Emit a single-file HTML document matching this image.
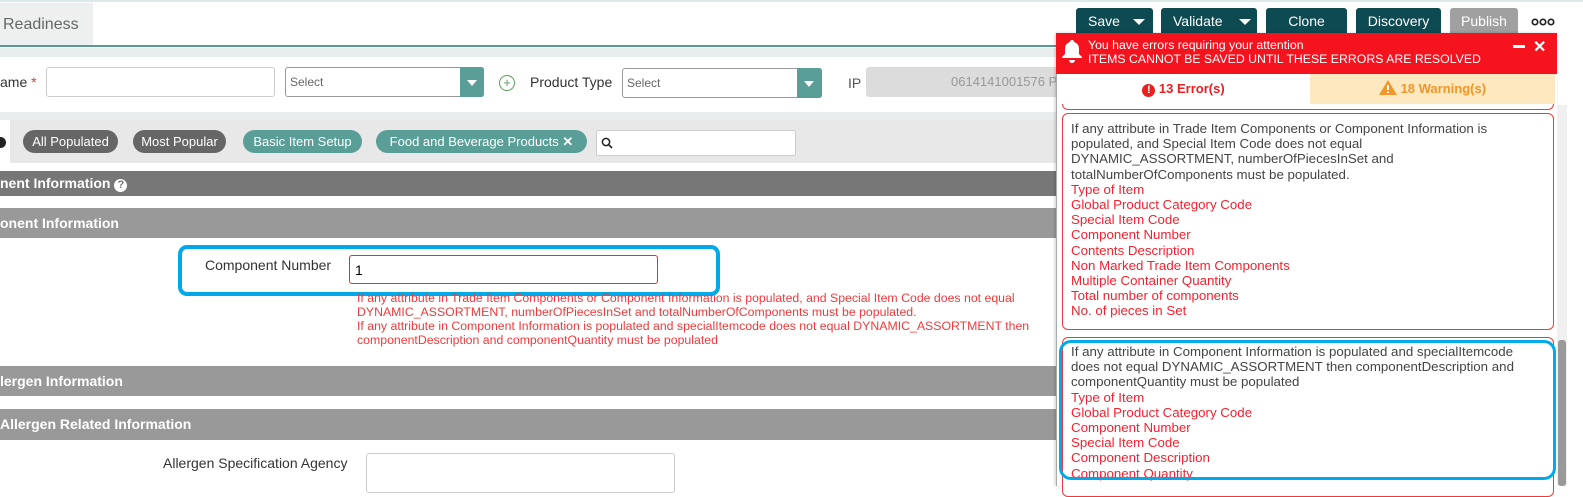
<!DOCTYPE html>
<html><head><meta charset="utf-8"><style>
*{box-sizing:border-box;margin:0;padding:0}
body{width:1583px;height:486px;overflow:hidden;background:#fff;font-family:"Liberation Sans",sans-serif;position:relative}
.a{position:absolute;white-space:nowrap}
.bar{position:absolute;left:0;width:1056px;color:#fff;font-weight:bold;font-size:14px}
.chip{position:absolute;top:130px;height:23px;border-radius:12px;color:#fff;font-size:13px;line-height:23px;text-align:center;white-space:nowrap}
.btn{position:absolute;top:8px;height:26px;background:#0e4a52;color:#fff;font-size:14px;line-height:26px;border-radius:3px 3px 0 0;text-align:center}
.card{position:absolute;left:1062px;width:492px;border:1px solid #f03a3a;border-radius:6px;background:#fff;padding:7px 8px;font-size:13.3px;line-height:15.2px;color:#444;white-space:nowrap;overflow:hidden}
.r{color:#f5222d}
</style></head><body>
<div class="a" style="left:0;top:0;width:1583px;height:2px;background:#dde8e8"></div>
<div class="a" style="left:0;top:3px;width:93px;height:43px;background:#eef0f0;color:#666;font-size:16px;line-height:43px;padding-left:3px">Readiness</div>
<div class="a" style="left:0;top:45px;width:1060px;height:2px;background:#5a9a94"></div>
<div class="a" style="left:0;top:48px;width:1060px;height:9px;background:#e8eeee"></div>
<div class="a" style="left:0;top:112px;width:1060px;height:8px;background:#e8eeee"></div>
<div class="a" style="left:10px;top:120px;width:1050px;height:43px;background:#e8e8e8"></div>
<div class="a" style="left:0;top:74px;font-size:14px;color:#333">ame <span style="color:#d33">*</span></div>
<div class="a" style="left:46px;top:67px;width:229px;height:30px;border:1px solid #ccc;border-radius:3px"></div>
<div class="a" style="left:285px;top:67px;width:199px;height:30px;border:1px solid #999;border-radius:3px;font-size:12px;color:#666;padding:7px 4px">Select</div>
<div class="a" style="left:460px;top:67px;width:24px;height:30px;background:#5a9e98;border-radius:0 3px 3px 0"></div>
<div class="a" style="left:467px;top:80px;border:5px solid transparent;border-top:6px solid #fff"></div>
<div class="a" style="left:499px;top:75px;width:16px;height:16px;border:1.3px solid #5a9e5a;border-radius:50%;color:#5a9e5a;font-size:13px;line-height:13px;text-align:center">+</div>
<div class="a" style="left:530px;top:74px;font-size:14px;color:#333">Product Type</div>
<div class="a" style="left:622px;top:68px;width:200px;height:30px;border:1px solid #999;border-radius:3px;font-size:12px;color:#666;padding:7px 4px">Select</div>
<div class="a" style="left:797px;top:68px;width:25px;height:30px;background:#5a9e98;border-radius:0 3px 3px 0"></div>
<div class="a" style="left:804px;top:81px;border:5px solid transparent;border-top:6px solid #fff"></div>
<div class="a" style="left:848px;top:75px;font-size:14px;color:#555">IP</div>
<div class="a" style="left:866px;top:67px;width:194px;height:30px;background:#dcdcdc;border-radius:3px;color:#999;font-size:13px;line-height:30px;padding-left:85px;overflow:hidden">0614141001576 P</div>
<div class="a" style="left:0;top:137px;width:6px;height:11px;background:#222;border-radius:0 6px 6px 0"></div>
<div class="chip" style="left:23px;width:95px;background:#666">All Populated</div>
<div class="chip" style="left:133px;width:93px;background:#666">Most Popular</div>
<div class="chip" style="left:243px;width:119px;background:#5a9e98">Basic Item Setup</div>
<div class="chip" style="left:376px;width:211px;background:#5a9e98">Food and Beverage Products <b>✕</b></div>
<div class="a" style="left:596px;top:130px;width:200px;height:26px;background:#fff;border:1px solid #ccc;border-radius:2px"></div>
<svg class="a" style="left:601px;top:137px" width="12" height="12" viewBox="0 0 12 12"><circle cx="5" cy="5" r="3.6" fill="none" stroke="#222" stroke-width="1.5"/><path d="M7.6 7.6L11 11" stroke="#222" stroke-width="1.6"/></svg>
<div class="bar" style="top:171px;height:25px;line-height:25px;background:#777">nent Information <span style="display:inline-block;width:13px;height:13px;border-radius:50%;background:#fff;color:#777;font-size:11px;line-height:13px;text-align:center">?</span></div>
<div class="bar" style="top:208px;height:30px;line-height:30px;background:#999">onent Information</div>
<div class="a" style="left:205px;top:257px;font-size:14px;color:#333">Component Number</div>
<div class="a" style="left:349px;top:255px;width:309px;height:29px;border:1px solid #d33;border-radius:3px;font-size:14px;padding:6px 5px">1</div>
<div class="a" style="left:178px;top:245px;width:542px;height:51px;border:4px solid #00aaea;border-radius:9px"></div>
<div class="a" style="left:357px;top:291px;font-size:12.3px;line-height:14px;color:#f03a3a">If any attribute in Trade Item Components or Component Information is populated, and Special Item Code does not equal<br>DYNAMIC_ASSORTMENT, numberOfPiecesInSet and totalNumberOfComponents must be populated.<br>If any attribute in Component Information is populated and specialItemcode does not equal DYNAMIC_ASSORTMENT then<br>componentDescription and componentQuantity must be populated</div>
<div class="bar" style="top:366px;height:30px;line-height:30px;background:#999">lergen Information</div>
<div class="bar" style="top:409px;height:31px;line-height:31px;background:#999">Allergen Related Information</div>
<div class="a" style="left:163px;top:455px;font-size:14px;color:#333">Allergen Specification Agency</div>
<div class="a" style="left:366px;top:453px;width:309px;height:40px;border:1px solid #ccc;border-radius:3px"></div>
<div class="btn" style="left:1076px;width:77px;text-align:left;padding-left:12px">Save <span style="position:absolute;left:57px;top:11px;border:6px solid transparent;border-top:6px solid #fff"></span></div>
<div class="btn" style="left:1161px;width:96px;text-align:left;padding-left:12px">Validate <span style="position:absolute;left:78px;top:11px;border:6px solid transparent;border-top:6px solid #fff"></span></div>
<div class="btn" style="left:1266px;width:81px">Clone</div>
<div class="btn" style="left:1356px;width:85px">Discovery</div>
<div class="btn" style="left:1450px;width:68px;background:#a0a0a0">Publish</div>
<svg class="a" style="left:1531px;top:18px" width="24" height="8"><circle cx="4" cy="4" r="2.7" fill="none" stroke="#222" stroke-width="1.7"/><circle cx="12" cy="4" r="2.7" fill="none" stroke="#222" stroke-width="1.7"/><circle cx="20" cy="4" r="2.7" fill="none" stroke="#222" stroke-width="1.7"/></svg>
<div class="a" style="left:1056px;top:33px;width:501px;height:453px;background:#fff;border-left:1px solid #aaa;box-shadow:-1px 0 3px rgba(0,0,0,.2)"></div>
<div class="a" style="left:1056px;top:33px;width:501px;height:41px;background:#f5141e;color:#fff;font-size:12.3px;line-height:14px;padding:5px 0 0 32px">You have errors requiring your attention<br>ITEMS CANNOT BE SAVED UNTIL THESE ERRORS ARE RESOLVED</div>
<svg class="a" style="left:1062px;top:38px" width="20" height="26" viewBox="0 0 20 26"><path d="M10 2a2 2 0 0 1 2 2c3 1 5 3 5 7v5l3 3v1H0v-1l3-3v-5c0-4 2-6 5-7a2 2 0 0 1 2-2z" fill="#fff"/><path d="M7 22h6a3 3 0 0 1-6 0z" fill="#fff"/></svg>
<div class="a" style="left:1513px;top:45px;width:12px;height:3px;background:#fff"></div>
<div class="a" style="left:1533px;top:37px;color:#fff;font-weight:bold;font-size:16px">✕</div>
<div class="a" style="left:1062px;top:96px;width:492px;height:14px;border:1px solid #f03a3a;border-top:none;border-radius:0 0 6px 6px"></div>
<div class="a" style="left:1057px;top:74px;width:253px;height:30px;background:#fff;color:#e82020;font-weight:bold;font-size:13px;line-height:30px;text-align:center"><span style="display:inline-block;width:13px;height:13px;border-radius:50%;background:#e82020;color:#fff;font-size:11px;line-height:13px">!</span> 13 Error(s)</div>
<div class="a" style="left:1310px;top:74px;width:245px;height:30px;background:#fde8c0;color:#f0962a;font-weight:bold;font-size:13px;line-height:30px;text-align:center"><svg width="18" height="15" viewBox="0 0 18 15" style="vertical-align:-2px"><path d="M9 0L18 15H0z" fill="#f0962a"/><path d="M9 5v5" stroke="#fff" stroke-width="2"/><circle cx="9" cy="12.3" r="1" fill="#fff"/></svg> 18 Warning(s)</div>
<div class="card" style="top:113px;height:217px">If any attribute in Trade Item Components or Component Information is<br>populated, and Special Item Code does not equal<br>DYNAMIC_ASSORTMENT, numberOfPiecesInSet and<br>totalNumberOfComponents must be populated.<br><span class="r">Type of Item<br>Global Product Category Code<br>Special Item Code<br>Component Number<br>Contents Description<br>Non Marked Trade Item Components<br>Multiple Container Quantity<br>Total number of components<br>No. of pieces in Set</span></div>
<div class="card" style="top:337px;height:160px;padding-top:6px">If any attribute in Component Information is populated and specialItemcode<br>does not equal DYNAMIC_ASSORTMENT then componentDescription and<br>componentQuantity must be populated<br><span class="r">Type of Item<br>Global Product Category Code<br>Component Number<br>Special Item Code<br>Component Description<br>Component Quantity</span></div>
<div class="a" style="left:1059px;top:340px;width:497px;height:140px;border:3px solid #00aaea;border-radius:12px"></div>
<div class="a" style="left:1557px;top:105px;width:10px;height:381px;background:#f0f0f0"></div>
<div class="a" style="left:1558px;top:340px;width:8px;height:146px;background:#999;border-radius:3px"></div>
</body></html>
